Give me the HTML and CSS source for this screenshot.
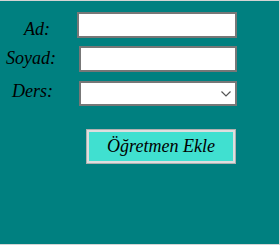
FILE: index.html
```html
<!DOCTYPE html>
<html lang="tr">
<head>
<meta charset="utf-8">
<title>Öğretmen Ekle</title>
<link rel="stylesheet" href="styles.css">
</head>
<body>
<div class="panel">
  <form class="form">
    <div class="row row-ad">
      <label class="label" for="ad">Ad:</label>
      <input class="field field-wide" id="ad" type="text">
    </div>
    <div class="row row-soyad">
      <label class="label" for="soyad">Soyad:</label>
      <input class="field" id="soyad" type="text">
    </div>
    <div class="row row-ders">
      <label class="label" for="ders">Ders:</label>
      <span class="select-wrap">
        <select class="field select" id="ders"></select>
        <svg class="chevron" width="10" height="6" viewBox="0 0 10 6" aria-hidden="true"><path d="M0.5 0.5 L5 5 L9.5 0.5" fill="none" stroke="#555" stroke-width="1.2"/></svg>
      </span>
    </div>
    <div class="actions">
      <button class="btn" type="button">Öğretmen Ekle</button>
    </div>
  </form>
</div>
</body>
</html>
```
FILE: styles.css
```css
html, body {
  margin: 0;
  padding: 0;
}
body {
  width: 280px;
  height: 245px;
  overflow: hidden;
}
.panel {
  box-sizing: border-box;
  width: 280px;
  height: 245px;
  background: #008080;
  border-top: 1px solid #d4d4d4;
  border-right: 1px solid #d4d4d4;
  border-bottom: 1px solid #d4d4d4;
  font-family: "Liberation Serif", serif;
  font-style: italic;
  font-size: 18px;
  color: #000;
}
.form {
  margin: 0;
  padding-top: 11px;
}
.row {
  display: flex;
  align-items: flex-start;
}
.label {
  box-sizing: border-box;
  line-height: 20px;
  width: 79px;
}
.row-ad .label {
  width: 77px;
  padding-left: 24px;
  padding-top: 7px;
}
.row-soyad {
  margin-top: 7px;
}
.row-soyad .label {
  padding-left: 6px;
  padding-top: 2px;
}
.row-ders {
  margin-top: 9px;
}
.row-ders .label {
  padding-left: 12px;
  padding-top: 0;
}
.field {
  box-sizing: border-box;
  width: 158px;
  height: 26px;
  margin: 0;
  background: #fff;
  border: 2px solid #777;
  border-radius: 0;
  font-family: "Liberation Sans", sans-serif;
  font-size: 13px;
  font-style: normal;
}
.field-wide {
  width: 160px;
}
.select-wrap {
  position: relative;
  display: block;
}
.select {
  display: block;
  height: 25px;
  appearance: none;
  -webkit-appearance: none;
}
.chevron {
  position: absolute;
  right: 6px;
  top: 10px;
}
.actions {
  display: flex;
  padding-left: 86px;
  margin-top: 23px;
}
.btn {
  box-sizing: border-box;
  width: 150px;
  height: 35px;
  margin: 0;
  padding: 0;
  background: #40e0d0;
  border: 3px solid #dedede;
  outline: 1px solid #b0b0b0;
  outline-offset: -1px;
  font-family: "Liberation Serif", serif;
  font-style: italic;
  font-size: 18px;
  color: #000;
}
```
